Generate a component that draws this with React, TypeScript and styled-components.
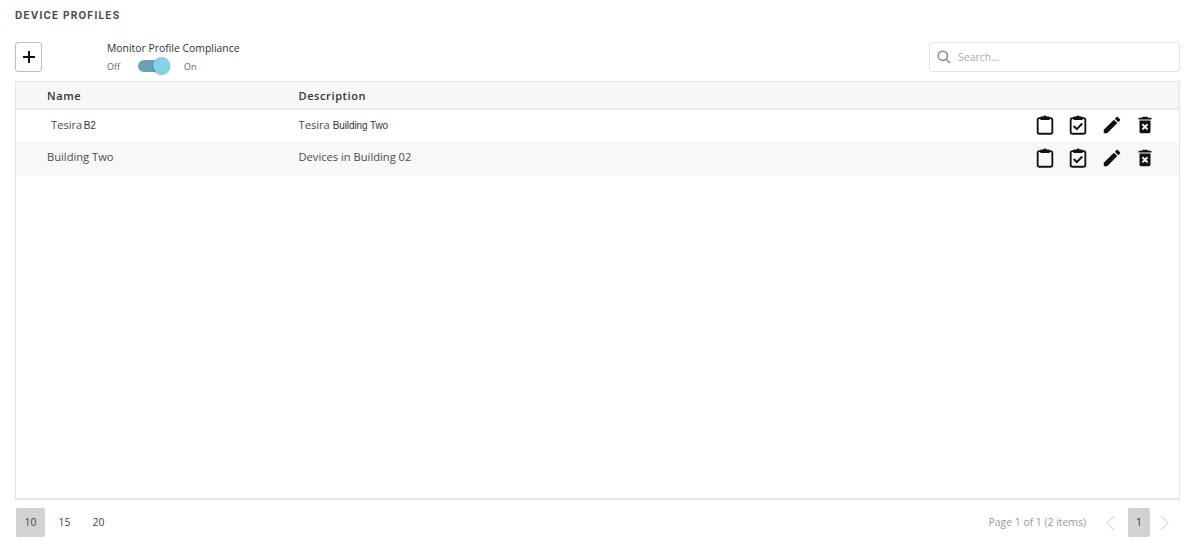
import React from "react";
import styled, { createGlobalStyle } from "styled-components";

const Global = createGlobalStyle`
  html, body { margin: 0; padding: 0; background: #fff; }
  body { font-family: "Open Sans", "Liberation Sans", sans-serif; color: #444; }
  * { box-sizing: border-box; }
`;

const Page = styled.div`
  width: 1200px;
  height: 551px;
  padding: 0 20px 0 15px;
  display: flex;
  flex-direction: column;
  overflow: hidden;
`;
const Title = styled.h1`
  margin: 0;
  height: 42px;
  padding-top: 9px;
  font: 700 10px/13px Inter, "Open Sans", sans-serif;
  letter-spacing: 1.22px;
  color: #4a4a4a;
`;
const Toolbar = styled.div`
  display: flex;
  align-items: flex-start;
  height: 39px;
`;
const AddButton = styled.button`
  width: 27px;
  height: 30px;
  padding: 0;
  background: #fff;
  border: 1px solid #bdbdbd;
  border-radius: 3px;
  display: flex;
  align-items: center;
  justify-content: center;
  color: #111;
`;
const Compliance = styled.div`
  margin-left: 65px;
  display: flex;
  flex-direction: column;
`;
const ComplianceLabel = styled.div`
  font-size: 10.4px;
  line-height: 13px;
  color: #333;
`;
const SwitchRow = styled.div`
  display: flex;
  align-items: center;
  height: 20px;
  margin-top: 1px;
  font-size: 9px;
  color: #666;
`;
const Track = styled.div`
  position: relative;
  width: 32px;
  height: 12px;
  margin: 0 14px 0 18px;
  background: #6b9fb3;
  border-radius: 6px;
`;
const Knob = styled.div`
  position: absolute;
  right: 0;
  top: -3px;
  width: 17px;
  height: 17px;
  border-radius: 50%;
  background: #84d2e8;
  box-shadow: 0 1px 2px rgba(0, 0, 0, 0.35);
`;
const SearchBox = styled.div`
  margin-left: auto;
  width: 251px;
  height: 30px;
  border: 1px solid #e2e2e2;
  border-radius: 3px;
  display: flex;
  align-items: center;
  padding-left: 6px;
  gap: 6px;
  font-size: 10.5px;
  color: #aaa;
`;
const Table = styled.div`
  height: 419px;
  border: 1px solid #e4e4e4;
  border-bottom-width: 2px;
  display: flex;
  flex-direction: column;
`;
const HeaderRow = styled.div`
  display: grid;
  grid-template-columns: 251.5px 1fr;
  align-items: center;
  height: 28px;
  padding-left: 31px;
  background: #f7f7f7;
  border-bottom: 2px solid #ececec;
  font-size: 11px;
  font-weight: 600;
  letter-spacing: 0.6px;
  color: #333;
`;
const Row = styled.div<{ $alt?: boolean }>`
  display: grid;
  grid-template-columns: 251.5px 1fr auto;
  align-items: center;
  height: 33px;
  margin-top: -1px;
  padding: 0 23px 2px 31px;
  background: ${(p) => (p.$alt ? "#f8f8f8" : "transparent")};
  font-size: 11.15px;
  color: #4a4a4a;
  & + & {
    margin-top: 0;
  }
  > span {
    padding-bottom: ${(p) => (p.$alt ? "2px" : "0")};
  }
`;
const Indented = styled.span`
  padding-left: 4px;
`;
const Small = styled.span<{ $tight?: boolean }>`
  font-family: "Liberation Sans", sans-serif;
  font-size: 10px;
  letter-spacing: -0.1px;
  color: #333;
  margin-left: ${(p) => (p.$tight ? "-1.5px" : "0")};
`;
const Actions = styled.div`
  display: flex;
  gap: 11.5px;
  color: #111;
`;
const Footer = styled.div`
  display: flex;
  align-items: center;
  height: 29px;
  margin-top: 8px;
  padding-left: 1px;
  font-size: 10.4px;
  color: #444;
`;
const PageSize = styled.div<{ $on?: boolean }>`
  width: 29px;
  height: 29px;
  margin-right: 5px;
  padding-bottom: 1px;
  display: flex;
  align-items: center;
  justify-content: center;
  background: ${(p) => (p.$on ? "#d2d2d2" : "transparent")};
  border-radius: 2px;
`;
const Info = styled.div`
  margin-left: auto;
  color: #999;
  margin-right: 18px;
  padding-bottom: 1px;
`;
const Chevron = styled.div<{ $gap: number }>`
  display: flex;
  color: #e2e2e2;
  margin-right: ${(p) => p.$gap}px;
`;
const Current = styled.div`
  width: 22px;
  height: 29px;
  margin-right: 7px;
  padding-bottom: 1px;
  display: flex;
  align-items: center;
  justify-content: center;
  background: #d2d2d2;
  border-radius: 2px;
  color: #333;
  font-weight: 500;
`;

const pencil = "M20.71,7.04C21.1,6.65 21.1,6 20.71,5.63L18.37,3.29C18,2.9 17.35,2.9 16.96,3.29L15.12,5.12L18.87,8.87M3,17.25V21H6.75L17.81,9.93L14.06,6.18L3,17.25Z";
const trash = "M19,4H15.5L14.5,3H9.5L8.5,4H5V6H19M6,19A2,2 0 0,0 8,21H16A2,2 0 0,0 18,19V7H6V19M8.46,11.88L9.87,10.47L12,12.59L14.12,10.47L15.53,11.88L13.41,14L15.53,16.12L14.12,17.53L12,15.41L9.87,17.53L8.46,16.12L10.59,14L8.46,11.88Z";

const Glyph = ({ children }: { children: React.ReactNode }) => (
  <svg width={22} height={22} viewBox="0 0 24 24" fill="currentColor">
    {children}
  </svg>
);

const Board = ({ checked }: { checked?: boolean }) => (
  <Glyph>
    <rect x="4" y="4.5" width="16" height="17" rx="2" fill="none" stroke="currentColor" strokeWidth="2" />
    <path d="M7 6.6V3.6a.8.8 0 0 1 .8-.8h2.4a2 2 0 0 1 3.6 0h2.4a.8.8 0 0 1 .8.8v3Z" />
    {checked && <path d="M6.6 13.8l1.5-1.5 2.6 2.6 5.2-5.3 1.5 1.5-6.7 6.8Z" />}
  </Glyph>
);

const RowActions = () => (
  <Actions>
    <Board />
    <Board checked />
    <Glyph><path d={pencil} /></Glyph>
    <Glyph><path d={trash} /></Glyph>
  </Actions>
);

export default function App() {
  return (
    <Page>
      <Global />
      <Title>DEVICE PROFILES</Title>
      <Toolbar>
        <AddButton aria-label="Add">
          <svg width="14" height="14" viewBox="0 0 14 14" stroke="currentColor" strokeWidth="2">
            <path d="M7 1v12M1 7h12" />
          </svg>
        </AddButton>
        <Compliance>
          <ComplianceLabel>Monitor Profile Compliance</ComplianceLabel>
          <SwitchRow>
            Off
            <Track>
              <Knob />
            </Track>
            On
          </SwitchRow>
        </Compliance>
        <SearchBox>
          <svg width="16" height="16" viewBox="0 0 16 16" fill="none" stroke="#888" strokeWidth="1.5">
            <circle cx="6.8" cy="6.8" r="4.6" />
            <path d="M10.2 10.2L14 14" />
          </svg>
          Search...
        </SearchBox>
      </Toolbar>
      <Table>
        <HeaderRow>
          <span>Name</span>
          <span>Description</span>
        </HeaderRow>
        <Row>
          <Indented>
            Tesira <Small $tight>B2</Small>
          </Indented>
          <span>
            Tesira <Small>Building Two</Small>
          </span>
          <RowActions />
        </Row>
        <Row $alt>
          <span>Building Two</span>
          <span>Devices in Building 02</span>
          <RowActions />
        </Row>
      </Table>
      <Footer>
        <PageSize $on>10</PageSize>
        <PageSize>15</PageSize>
        <PageSize>20</PageSize>
        <Info>Page 1 of 1 (2 items)</Info>
        <Chevron $gap={10}>
          <svg width="14" height="16" viewBox="0 0 14 16" fill="none" stroke="currentColor" strokeWidth="1.5">
            <path d="M10 1L3 8l7 7" />
          </svg>
        </Chevron>
        <Current>1</Current>
        <Chevron $gap={9}>
          <svg width="14" height="16" viewBox="0 0 14 16" fill="none" stroke="currentColor" strokeWidth="1.5">
            <path d="M4 1l7 7-7 7" />
          </svg>
        </Chevron>
      </Footer>
    </Page>
  );
}
